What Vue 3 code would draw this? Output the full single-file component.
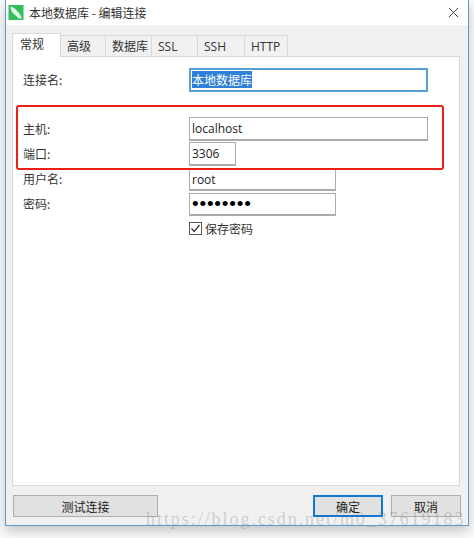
<template>
  <div class="page">
    <div class="window">
      <header class="titlebar">
        <svg class="logo" viewBox="0 0 16 16" aria-hidden="true">
          <rect width="16" height="16" fill="#2fbf5b" />
          <path d="M2 1.5 C5 2 7 3.5 9 6 C11 8 13 10 14.5 14.5 L10.5 14.5 C9.5 12 7.5 11 5.5 9.5 C3.5 7.5 2.5 5 2 1.5Z" fill="#dff5e6" />
        </svg>
        <span class="title">本地数据库 - 编辑连接</span>
        <svg class="close" viewBox="0 0 12 12" aria-hidden="true">
          <path d="M1 1 L11 11 M11 1 L1 11" stroke="#333" stroke-width="1" fill="none" />
        </svg>
      </header>

      <div class="content">
        <nav class="tabs">
          <span
            v-for="(tab, i) in tabs"
            :key="tab.name"
            class="tab"
            :class="{ active: i === 0 }"
            :style="{ width: tab.width + 'px' }"
          >{{ tab.name }}</span>
        </nav>

        <section class="panel">
          <div class="row first">
            <label>连接名:</label>
            <div class="input full conn"><span class="selected">本地数据库</span></div>
          </div>
          <div class="row host">
            <label>主机:</label>
            <div class="input full">localhost</div>
          </div>
          <div class="row port">
            <label>端口:</label>
            <div class="input short">3306</div>
          </div>
          <div class="row user">
            <label>用户名:</label>
            <div class="input mid">root</div>
          </div>
          <div class="row pass">
            <label>密码:</label>
            <div class="input mid dots">••••••••</div>
          </div>
          <div class="row check">
            <label></label>
            <div class="checkline">
              <svg class="box" viewBox="0 0 13 13" aria-hidden="true">
                <rect x="0.5" y="0.5" width="12" height="12" fill="#fff" stroke="#555" />
                <path d="M2.5 6.5 L5.2 9.5 L10.5 3" stroke="#333" stroke-width="1.2" fill="none" />
              </svg>
              <span>保存密码</span>
            </div>
          </div>
          <div class="highlight"></div>
        </section>

        <footer class="actions">
          <button class="btn test">测试连接</button>
          <span class="spacer"></span>
          <button class="btn ok">确定</button>
          <button class="btn cancel">取消</button>
        </footer>
      </div>
      <div class="watermark">https://blog.csdn.net/m0_37619183</div>
    </div>
  </div>
</template>

<script setup>
const tabs = [
  { name: '常规', width: 49 },
  { name: '高级', width: 45 },
  { name: '数据库', width: 46 },
  { name: 'SSL', width: 46 },
  { name: 'SSH', width: 47 },
  { name: 'HTTP', width: 43 }
]
</script>

<style>
html, body { margin: 0; background: #fbfbfb; }
</style>

<style scoped>
.page {
  width: 474px;
  height: 538px;
  padding: 0 5px;
  box-sizing: border-box;
  overflow: hidden;
  font-family: "Noto Sans CJK SC", "Liberation Sans", sans-serif;
  font-size: 12px;
  color: #222;
}
.window {
  position: relative;
  width: 464px;
  height: 526px;
  box-sizing: border-box;
  border: 1px solid #5b9bd0;
  border-top: 0;
  background: #f0f0f0;
  box-shadow: 0 5px 12px rgba(0, 0, 0, 0.22);
}
.titlebar {
  height: 25px;
  background: #fff;
  display: flex;
  align-items: center;
  padding: 0 9px 0 2px;
  gap: 5px;
}
.logo { width: 16px; height: 15px; flex: none; }
.title { flex: 1; font-size: 12px; color: #333; }
.close { width: 11px; height: 11px; flex: none; }
.content {
  padding: 10px 8px 0 6px;
}
.tabs {
  display: flex;
  height: 21px;
  align-items: flex-end;
}
.tab {
  height: 21px;
  box-sizing: border-box;
  border: 1px solid #d9d9d9;
  border-bottom: 0;
  border-left: 0;
  background: #f0f0f0;
  display: flex;
  align-items: center;
  padding-left: 6px;
  font-family: "Open Sans", "Noto Sans CJK SC", sans-serif;
  font-size: 12px;
  color: #333;
}
.tab.active {
  height: 24px;
  background: #fff;
  border-left: 1px solid #d9d9d9;
  padding-left: 7px;
  padding-bottom: 4px;
  position: relative;
  z-index: 1;
  margin-bottom: -1px;
}
.panel {
  position: relative;
  height: 430px;
  box-sizing: border-box;
  background: #fff;
  border: 1px solid #d9d9d9;
  padding-top: 11px;
}
.row {
  display: flex;
  align-items: center;
}
.row label {
  width: 176px;
  flex: none;
  padding: 0 0 2px 10px;
  box-sizing: border-box;
  color: #333;
}
.first { height: 24px; }
.host { margin-top: 25px; height: 24px; }
.port { margin-top: 1px; height: 24px; }
.user { margin-top: 2px; height: 23px; }
.pass { margin-top: 2px; height: 23px; }
.check { margin-top: 6px; height: 13px; }
.input {
  box-sizing: border-box;
  height: 100%;
  background: #fff;
  border: 1px solid #ababab;
  border-bottom-width: 2px;
  padding: 0 2px;
  display: flex;
  align-items: center;
  font-family: "Open Sans", "Liberation Sans", sans-serif;
  font-size: 12px;
  color: #222;
}
.full { width: 239px; }
.mid { width: 147px; }
.short { width: 47px; }
.conn { border: 2px solid #5a9fd4; padding: 0 1px; }
.selected {
  background: #2f80d8;
  color: #fff;
  font-family: "Noto Sans CJK SC", sans-serif;
  line-height: 17px;
  margin-bottom: 1px;
}
.dots { font-size: 19px; letter-spacing: 0.8px; color: #000; font-family: "Liberation Sans", sans-serif; }
.checkline {
  display: flex;
  align-items: center;
  gap: 3px;
  color: #333;
}
.box { width: 13px; height: 13px; }
.highlight {
  position: absolute;
  left: 3px;
  top: 48px;
  width: 428px;
  height: 65px;
  box-sizing: border-box;
  border: 2.5px solid #ea1f1a;
  border-radius: 3px;
  pointer-events: none;
}
.actions {
  display: flex;
  margin: 9px -1px 0 0;
  padding-left: 1px;
  gap: 8px;
}
.spacer { flex: 1; }
.btn {
  height: 22px;
  box-sizing: border-box;
  border: 1px solid #adadad;
  background: #e1e1e1;
  font-family: "Noto Sans CJK SC", sans-serif;
  font-size: 12px;
  color: #222;
  padding: 0;
}
.test { width: 145px; }
.ok, .cancel { width: 70px; }
.ok { border: 2px solid #0f78d4; }
.watermark {
  position: absolute;
  left: 140px;
  top: 509px;
  font-family: "Liberation Serif", serif;
  font-size: 18px;
  letter-spacing: 1.95px;
  color: rgba(120, 120, 120, 0.3);
  white-space: nowrap;
  pointer-events: none;
}
</style>
